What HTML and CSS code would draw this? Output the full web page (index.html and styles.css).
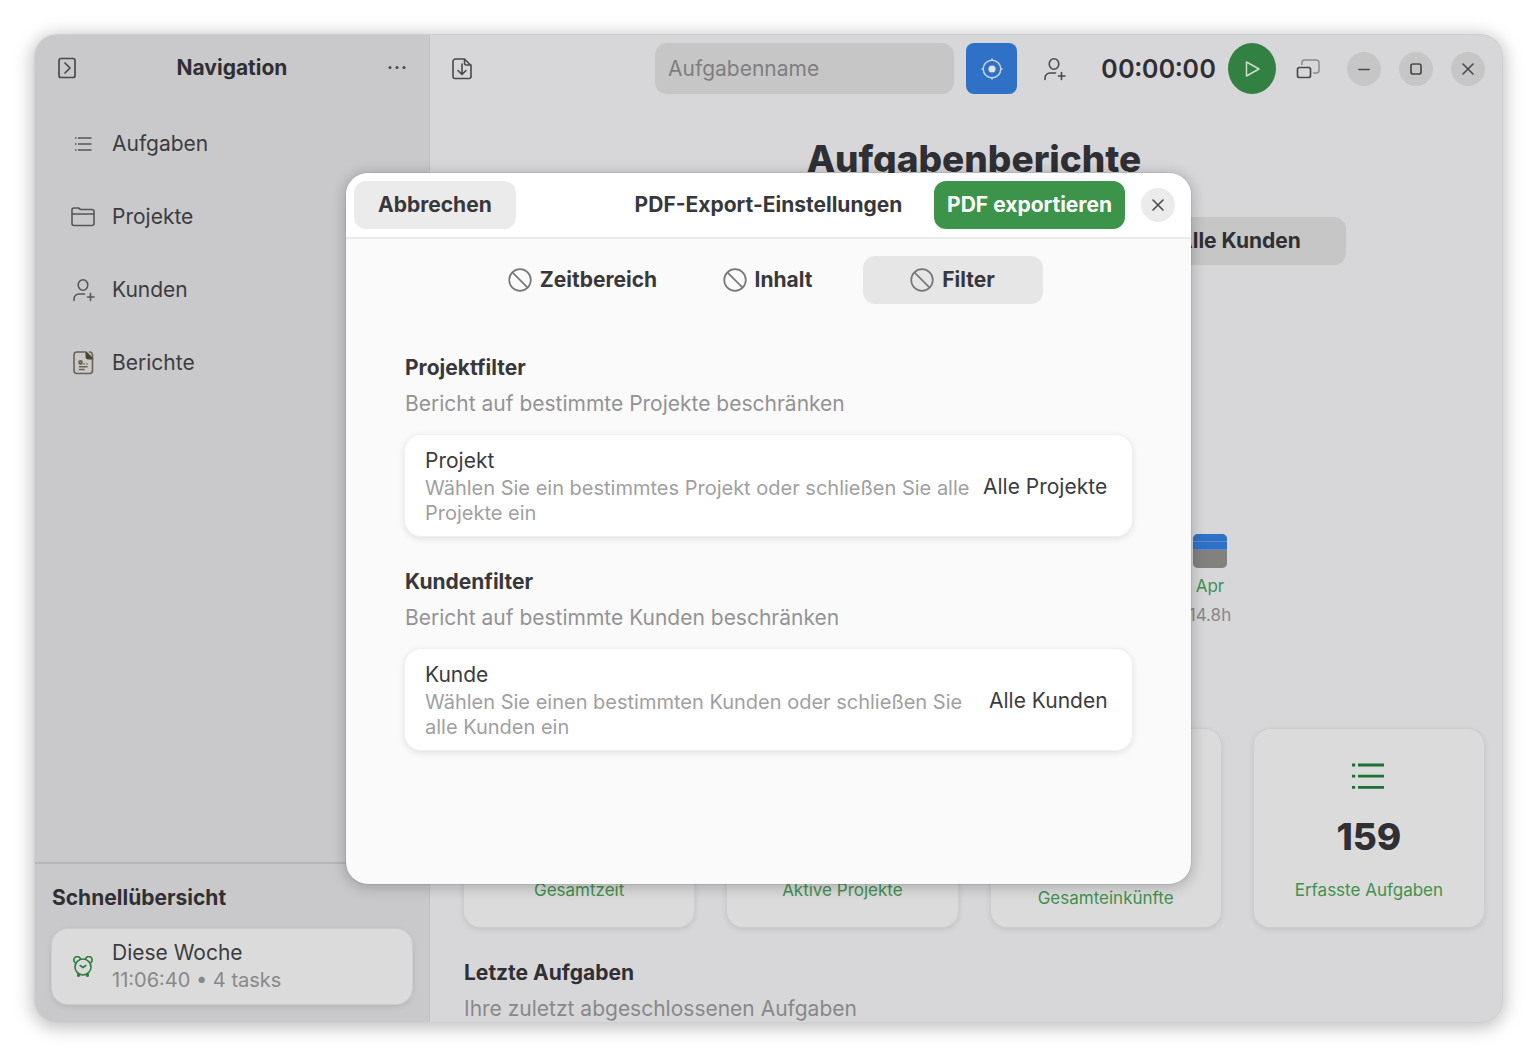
FILE: index.html
```html
<!DOCTYPE html>
<html lang="de">
<head>
<meta charset="utf-8">
<meta name="viewport" content="width=device-width, initial-scale=1">
<title>Aufgabenberichte</title>
<link rel="stylesheet" href="styles.css">
</head>
<body>
<svg class="sprite" aria-hidden="true">
  <symbol id="i-list" viewBox="0 0 20 20"><path d="M2 4h1.500M2 10h1.500M2 16h1.500M5 4h13.500M5 10h13.500M5 16h13.500" fill="none" stroke="currentColor" stroke-width="1.700"/></symbol>
  <symbol id="i-user" viewBox="0 0 24 24"><g fill="none" stroke="currentColor" stroke-width="1.600" stroke-linecap="round"><ellipse cx="12" cy="7" rx="4.800" ry="5.300"/><path d="M3 22.500v-1.500a5 5 0 0 1 5-5h5.500M19.500 15.500v7M16.500 19h6.500"/></g></symbol>
  <symbol id="i-close" viewBox="0 0 16 16"><path d="M3 3l10 10M13 3L3 13" fill="none" stroke="currentColor" stroke-width="1.600" stroke-linecap="round"/></symbol>
  <symbol id="i-none" viewBox="0 0 24 24"><g fill="none" stroke="#77777a" stroke-width="1.700"><circle cx="12" cy="12" r="10.800"/><path d="M4.400 4.400l15.200 15.200"/></g></symbol>
</svg>

<div class="window">
  <aside class="sidebar">
    <header class="sidebar-header">
      <button class="icon-button" type="button" aria-label="Seitenleiste umschalten">
        <svg width="20" height="22" viewBox="0 0 20 22" fill="none" stroke="currentColor" stroke-width="1.700" stroke-linecap="round" stroke-linejoin="round"><rect x="2" y="1.500" width="16" height="19" rx="2"/><path d="M8 6l5 5-5 5"/></svg>
      </button>
      <h2 class="title">Navigation</h2>
      <button class="icon-button" type="button" aria-label="Menü">
        <svg width="20" height="20" viewBox="0 0 20 20" fill="currentColor"><circle cx="3" cy="9.500" r="1.500"/><circle cx="10" cy="9.500" r="1.500"/><circle cx="17" cy="9.500" r="1.500"/></svg>
      </button>
    </header>
    <nav class="nav">
      <a class="nav-item" href="#aufgaben"><svg class="icon-small"><use href="#i-list"/></svg>Aufgaben</a>
      <a class="nav-item" href="#projekte">
        <svg viewBox="0 0 24 24" fill="none" stroke="currentColor" stroke-width="1.600" stroke-linejoin="round"><path d="M1 9V5a2 2 0 0 1 2-2h4.500l2 1.500H21a2 2 0 0 1 2 2V18.500a2 2 0 0 1-2 2H3a2 2 0 0 1-2-2zM1 9h22"/></svg>Projekte</a>
      <a class="nav-item" href="#kunden"><svg><use href="#i-user"/></svg>Kunden</a>
      <a class="nav-item" href="#berichte">
        <svg viewBox="0 0 24 24" fill="none" stroke="#6a6350" stroke-width="1.600" stroke-linecap="round"><path d="M6 1h9l6.500 6.500v12a3 3 0 0 1-3 3H6a3 3 0 0 1-3-3V4a3 3 0 0 1 3-3z"/><path d="M18.500 1a3 3 0 0 1 3 3v4" /><path d="M14.500 1h1l6 6v1.500h-4a3 3 0 0 1-3-3z" fill="#4b452c" stroke="none"/><circle cx="9.500" cy="11.500" r="1.600" fill="#8a8470"/><path d="M13 13h.2M16 13h.2M8.500 15.800h7.500M8.500 18.500h4.500"/></svg>Berichte</a>
    </nav>
    <section class="overview">
      <h2 class="title">Schnellübersicht</h2>
      <div class="card week">
        <svg width="20" height="22" viewBox="0 0 20 22" fill="none" stroke="#2c7c3f" stroke-width="1.600" stroke-linecap="round"><circle cx="10" cy="11" r="8"/><path d="M2 6.500A3.400 3.400 0 1 1 7.500 3M18 6.500A3.400 3.400 0 1 0 12.500 3M7.200 9.500l2.800 2 2.800-2"/><path d="M5.500 18.800v.6M14.500 18.800v.6" stroke-width="3"/></svg>
        <div>
          <div class="row-title">Diese Woche</div>
          <div class="muted">11:06:40 • 4 tasks</div>
        </div>
      </div>
    </section>
  </aside>

  <main class="main">
    <header class="toolbar">
      <button class="icon-button" type="button" aria-label="Bericht exportieren">
        <svg width="20" height="22" viewBox="0 0 20 22" fill="none" stroke="currentColor" stroke-width="1.600" stroke-linecap="round" stroke-linejoin="round"><path d="M4 1h8.500L19 7.500V18.500a2 2 0 0 1-2 2H3a2 2 0 0 1-2-2V3.500A2.500 2.500 0 0 1 3.500 1zM12.500 1v4a2 2 0 0 0 2 2H19M10 6v10M6 12.500l4 4 4-4"/></svg>
      </button>
      <input class="task-name" type="text" placeholder="Aufgabenname" aria-label="Aufgabenname">
      <button class="focus-button" type="button" aria-label="Fokus">
        <svg width="22" height="22" viewBox="0 0 22 22" fill="none" stroke="#c9d5e6" stroke-width="1.500" stroke-linecap="round"><circle cx="11" cy="11" r="8.800"/><circle cx="11" cy="11" r="3.600" fill="#e2e2e2" stroke="none"/><path d="M11 1v1M11 20v1M1 11h1M20 11h1"/></svg>
      </button>
      <button class="icon-button user-button" type="button" aria-label="Kunde hinzufügen"><svg width="24" height="24"><use href="#i-user"/></svg></button>
      <time class="timer">00:00:00</time>
      <button class="play-button" type="button" aria-label="Start">
        <svg width="18" height="18" viewBox="0 0 18 18" fill="none" stroke="#c9dccd" stroke-width="1.500" stroke-linejoin="round"><path d="M3.500 2v14L16 9z"/></svg>
      </button>
      <button class="icon-button" type="button" aria-label="Kleines Fenster">
        <svg width="24" height="20" viewBox="0 0 24 20" fill="none" stroke-width="1.500"><path d="M6 6V3.500A2.500 2.500 0 0 1 8.500 1h12A2.500 2.500 0 0 1 23 3.500v8a2.500 2.500 0 0 1-2.500 2.500H17" stroke="#8b8b8e"/><rect x="1.500" y="8.500" width="13" height="10" rx="2" stroke="#4a4a4e" stroke-width="1.700"/></svg>
      </button>
      <div class="window-controls">
        <button class="round-button" type="button" aria-label="Minimieren"><svg viewBox="0 0 16 16"><path d="M3 8.500h10" stroke="currentColor" stroke-width="1.600" stroke-linecap="round"/></svg></button>
        <button class="round-button" type="button" aria-label="Maximieren"><svg viewBox="0 0 16 16"><rect x="3" y="3" width="10" height="10" rx="2" fill="none" stroke="currentColor" stroke-width="1.700"/></svg></button>
        <button class="round-button" type="button" aria-label="Schließen"><svg><use href="#i-close"/></svg></button>
      </div>
    </header>

    <div class="report">
      <h1 class="report-title">Aufgabenberichte</h1>
      <div class="report-filters">
        <select class="report-select" aria-label="Kunden"><option>Alle Kunden</option></select>
      </div>
      <div class="chart">
        <div class="month">
          <div class="bar"><span class="bar-part"></span><span class="bar-part"></span><span class="bar-part bar-rest"></span></div>
          <div class="month-name">Apr</div>
          <div class="month-hours">14.8h</div>
        </div>
      </div>
      <div class="stats">
        <div class="card stat"><div class="stat-label">Gesamtzeit</div></div>
        <div class="card stat"><div class="stat-label">Aktive Projekte</div></div>
        <div class="card stat stat-tall"><div class="stat-label">Gesamteinkünfte</div></div>
        <div class="card stat">
          <svg width="36" height="36" viewBox="0 0 36 36" stroke="#1b7133" stroke-width="2.800"><path d="M1 7h3.200M1 18.200h3.200M1 29.400h3.200M7 7h26M7 18.200h26M7 29.400h26"/></svg>
          <div class="stat-value">159</div>
          <div class="stat-label">Erfasste Aufgaben</div>
        </div>
      </div>
      <h2 class="title">Letzte Aufgaben</h2>
      <p class="subtitle">Ihre zuletzt abgeschlossenen Aufgaben</p>
    </div>
  </main>

  <div class="overlay">
    <section class="dialog" role="dialog" aria-modal="true" aria-labelledby="dialog-title">
      <header class="dialog-header">
        <div class="dialog-start"><button class="button" type="button">Abbrechen</button></div>
        <h2 class="title" id="dialog-title">PDF-Export-Einstellungen</h2>
        <div class="dialog-end">
          <button class="button button-primary" type="button">PDF exportieren</button>
          <button class="round-button round-light" type="button" aria-label="Schließen"><svg><use href="#i-close"/></svg></button>
        </div>
      </header>
      <div class="tabs" role="tablist">
        <button class="tab" type="button" role="tab" aria-selected="false"><svg><use href="#i-none"/></svg>Zeitbereich</button>
        <button class="tab" type="button" role="tab" aria-selected="false"><svg><use href="#i-none"/></svg>Inhalt</button>
        <button class="tab" type="button" role="tab" aria-selected="true"><svg><use href="#i-none"/></svg>Filter</button>
      </div>
      <div class="groups">
        <section class="group">
          <h3 class="title">Projektfilter</h3>
          <p class="subtitle">Bericht auf bestimmte Projekte beschränken</p>
          <div class="choice">
            <div class="choice-text">
              <label class="row-title" for="projekt">Projekt</label>
              <div class="choice-info">Wählen Sie ein bestimmtes Projekt oder schließen Sie alle Projekte ein</div>
            </div>
            <select class="choice-select" id="projekt"><option>Alle Projekte</option></select>
          </div>
        </section>
        <section class="group">
          <h3 class="title">Kundenfilter</h3>
          <p class="subtitle">Bericht auf bestimmte Kunden beschränken</p>
          <div class="choice">
            <div class="choice-text">
              <label class="row-title" for="kunde">Kunde</label>
              <div class="choice-info">Wählen Sie einen bestimmten Kunden oder schließen Sie alle Kunden ein</div>
            </div>
            <select class="choice-select" id="kunde"><option>Alle Kunden</option></select>
          </div>
        </section>
      </div>
    </section>
  </div>
</div>
</body>
</html>
```
FILE: styles.css
```css
* { box-sizing: border-box; }

body {
  margin: 0;
  height: 100vh;
  padding: 35px 34px 35px 35px;
  display: flex;
  background: #fff;
  color: #2f2f34;
  font: 21px/26px Inter, "Noto Sans", sans-serif;
}

h1, h2, h3, p { margin: 0; }

button, input, select {
  margin: 0;
  padding: 0;
  border: 0;
  background: none;
  color: inherit;
  font: inherit;
}

select { appearance: none; }

svg { display: block; flex: none; }

.sprite { display: none; }

.window {
  position: relative;
  flex: 1;
  min-width: 0;
  display: flex;
  overflow: hidden;
  border-radius: 22px;
  background: #d7d7d9;
  box-shadow: 0 0 0 1px #cfcfcf, 0 3px 18px 3px rgba(0, 0, 0, .25);
}

.title { font-size: 21px; line-height: 28px; font-weight: 700; }
.row-title { display: block; color: #3c3c40; line-height: 27px; }
.muted { color: #88888a; font-size: 20px; line-height: 28px; }
.subtitle { color: #88888a; margin-top: 8px; line-height: 28px; }

.icon-button {
  display: grid;
  place-items: center;
  width: 40px;
  height: 50px;
  color: #4a4a4e;
}

/* Sidebar */
.sidebar {
  flex: none;
  width: 395px;
  display: flex;
  flex-direction: column;
  background: #c9c9cb;
  border-right: 1px solid #bfbfc1;
}

.sidebar-header {
  display: flex;
  align-items: center;
  justify-content: space-between;
  padding: 8px 12px;
}

.nav { flex: 1; padding: 6px 36px; }

.nav-item {
  display: flex;
  align-items: center;
  gap: 17px;
  height: 73px;
  color: #3c3c40;
  text-decoration: none;
}

.nav-item svg { width: 24px; height: 24px; color: #55555a; }
.nav-item .icon-small { width: 20px; height: 20px; margin: 0 2px; }

.overview {
  padding: 20px 17px 18px;
  border-top: 2px solid #b7b7b9;
}

.card {
  border-radius: 16px;
  background: #dbdbdb;
  box-shadow: 0 0 0 1px #cdcdcf, 0 2px 6px rgba(0, 0, 0, .12);
}

.week {
  display: flex;
  align-items: center;
  gap: 19px;
  height: 75px;
  margin-top: 17px;
  padding: 0 21px;
}

/* Main area */
.main { flex: 1; min-width: 0; display: flex; flex-direction: column; }

.toolbar {
  flex: none;
  display: flex;
  align-items: center;
  gap: 12px;
  padding: 8px 17px 0 12px;
}

.task-name {
  width: 299px;
  height: 51px;
  margin-left: auto;
  padding: 0 13px;
  border-radius: 12px;
  background: #c6c6c6;
}

.task-name::placeholder { color: #7e7e82; opacity: 1; }

.focus-button {
  display: grid;
  place-items: center;
  width: 51px;
  height: 51px;
  border-radius: 8px;
  background: #2f71c6;
}

.user-button { width: 50px; }

.timer {
  margin-left: 10px;
  font-size: 26px;
  font-weight: 600;
  font-variant-numeric: tabular-nums;
}

.play-button {
  display: grid;
  place-items: center;
  width: 48px;
  height: 51px;
  border-radius: 50%;
  background: #338043;
}

.window-controls { display: flex; gap: 18px; margin-left: 7px; }

.round-button {
  display: grid;
  place-items: center;
  width: 34px;
  height: 34px;
  border-radius: 50%;
  background: #c6c6c6;
  color: #4a4a4e;
}

.round-button svg { width: 16px; height: 16px; }
.round-light { background: #ebebeb; }

.report {
  flex: 1;
  min-height: 0;
  overflow: hidden;
  padding: 40px 18px 0 34px;
}

.report-title {
  font-size: 37px;
  line-height: 50px;
  font-weight: 800;
  text-align: center;
}

.report-filters {
  display: flex;
  justify-content: flex-end;
  max-width: 744px;
  margin: 33px auto 0;
}

.report-select {
  width: 214px;
  height: 48px;
  border-radius: 12px;
  background: #c6c6c6;
  font-weight: 700;
  text-align: center;
}

.chart {
  display: flex;
  align-items: flex-end;
  justify-content: flex-end;
  height: 363px;
  max-width: 516px;
  margin: 0 auto;
}

.month {
  width: 44px;
  display: flex;
  flex-direction: column;
  align-items: center;
  font-size: 17px;
}

.bar {
  width: 34px;
  height: 34px;
  display: flex;
  flex-direction: column;
  gap: 1px;
  overflow: hidden;
  border-radius: 5px;
  background: #5b8bcb;
}

.bar-part { height: 7px; background: #2f71c6; }
.bar-rest { flex: 1; background: #82817e; }
.month-name { margin-top: 5px; color: #3f9150; }
.month-hours { margin-top: 3px; color: #88888a; }

.stats {
  display: grid;
  grid-template-columns: repeat(4, 1fr);
  gap: 33px;
  margin: 101px 0 32px;
}

.stat {
  height: 198px;
  display: flex;
  flex-direction: column;
  align-items: center;
  justify-content: flex-end;
  padding-bottom: 24px;
}

.stat-tall { padding-bottom: 16px; }
.stat-value { margin: 18px 0 15px; font-size: 37px; line-height: 50px; font-weight: 800; }
.stat-label { color: #3f9150; font-size: 17px; }

/* Export dialog */
.overlay {
  position: absolute;
  inset: 0;
  display: grid;
  place-items: center;
}

.dialog {
  width: 845px;
  max-width: 100%;
  min-height: 711px;
  overflow: hidden;
  border-radius: 22px;
  background: #fafafa;
  color: #38383c;
  box-shadow: 0 0 0 1px rgba(0, 0, 0, .06), 0 2px 14px 2px rgba(0, 0, 0, .2);
}

.dialog .subtitle { color: #939395; }

.dialog-header {
  display: grid;
  grid-template-columns: 1fr auto 1fr;
  align-items: center;
  padding: 8px 16px 8px 8px;
  background: #fff;
  border-bottom: 2px solid #ebebeb;
}

.dialog-header .title { padding-left: 8px; }
.dialog-end { display: flex; align-items: center; justify-content: flex-end; gap: 16px; }

.button {
  height: 48px;
  padding: 0 24px;
  border-radius: 12px;
  background: #ebebeb;
  font-weight: 700;
}

.button-primary { padding: 0 13px; background: #3b944a; color: #fff; white-space: nowrap; }

.tabs { display: flex; justify-content: center; gap: 5px; padding: 17px 2px 0 0; }

.tab {
  display: flex;
  align-items: center;
  justify-content: center;
  gap: 8px;
  width: 180px;
  height: 48px;
  border-radius: 12px;
  font-weight: 700;
}

.tab[aria-selected="true"] { background: #e6e6e6; }
.tab svg { width: 24px; height: 24px; }

.groups {
  display: flex;
  flex-direction: column;
  gap: 32px;
  padding: 50px 59px;
}

.choice {
  display: flex;
  align-items: center;
  gap: 10px;
  margin-top: 17px;
  padding: 12px 24px 10px 20px;
  border-radius: 16px;
  background: #fff;
  box-shadow: 0 0 0 1px #f0f0f0, 0 2px 6px 1px rgba(0, 0, 0, .1);
}

.choice-text { flex: 1; }
.choice-info { margin-top: 2px; color: #a0a0a2; font-size: 20px; line-height: 25px; }
.choice-select { color: #3c3c40; }
```
